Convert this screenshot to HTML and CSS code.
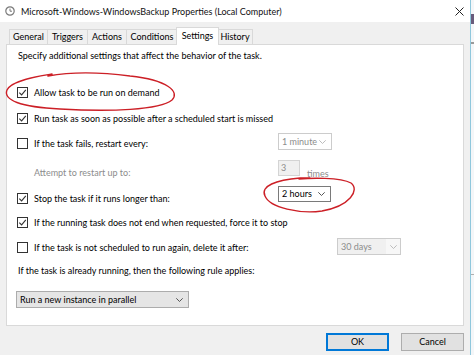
FILE: index.html
```html
<!DOCTYPE html>
<html>
<head>
<meta charset="utf-8">
<link rel="stylesheet" href="styles.css">
</head>
<body>
<div class="screen">
  <div class="dialog">
    <div class="titlebar">
      <svg class="appicon" width="10" height="10" viewBox="0 0 10 10"><circle cx="5" cy="5" r="4.2" fill="#fff" stroke="#7a7a7a" stroke-width="1.2"/><path d="M5 2.6V5.2H7" fill="none" stroke="#7a7a7a" stroke-width="1"/></svg>
      <span class="title">Microsoft-Windows-WindowsBackup Properties (Local Computer)</span>
      <svg class="close" width="9" height="9" viewBox="0 0 9 9"><path d="M0.5 0.5L8.5 8.5M8.5 0.5L0.5 8.5" stroke="#222" stroke-width="1"/></svg>
    </div>
    <div class="body">
      <div class="tabs">
        <div class="tab t-general">General</div>
        <div class="tab t-triggers">Triggers</div>
        <div class="tab t-actions">Actions</div>
        <div class="tab t-conditions">Conditions</div>
        <div class="tab selected t-settings">Settings</div>
        <div class="tab t-history">History</div>
      </div>
      <div class="panel">
        <div class="desc">Specify additional settings that affect the behavior of the task.</div>

        <div class="row r1">
          <span class="check on"><svg width="9" height="9" viewBox="0 0 9 9"><path d="M1.3 4.6L3.6 6.9L7.8 1.8" fill="none" stroke="#333" stroke-width="1.1"/></svg></span>
          <span class="label">Allow task to be run on demand</span>
        </div>
        <div class="row r2">
          <span class="check on"><svg width="9" height="9" viewBox="0 0 9 9"><path d="M1.3 4.6L3.6 6.9L7.8 1.8" fill="none" stroke="#333" stroke-width="1.1"/></svg></span>
          <span class="label">Run task as soon as possible after a scheduled start is missed</span>
        </div>
        <div class="row r3">
          <span class="check"></span>
          <span class="label w-ctl">If the task fails, restart every:</span>
          <span class="select disabled s-minute">1 minute<svg class="chev" width="7" height="4" viewBox="0 0 7 4"><path d="M0.3 0.3L3.5 3.5L6.7 0.3" fill="none" stroke="#b5b5b5" stroke-width="0.9"/></svg></span>
        </div>
        <div class="row r4">
          <span class="label indent gray w-ind">Attempt to restart up to:</span>
          <span class="input disabled">3</span>
          <span class="label gray times">times</span>
        </div>
        <div class="row r5">
          <span class="check on"><svg width="9" height="9" viewBox="0 0 9 9"><path d="M1.3 4.6L3.6 6.9L7.8 1.8" fill="none" stroke="#333" stroke-width="1.1"/></svg></span>
          <span class="label w-ctl">Stop the task if it runs longer than:</span>
          <span class="select s-hours">2 hours<svg class="chev" width="7" height="4" viewBox="0 0 7 4"><path d="M0.3 0.3L3.5 3.5L6.7 0.3" fill="none" stroke="#444" stroke-width="0.9"/></svg></span>
        </div>
        <div class="row r6">
          <span class="check on"><svg width="9" height="9" viewBox="0 0 9 9"><path d="M1.3 4.6L3.6 6.9L7.8 1.8" fill="none" stroke="#333" stroke-width="1.1"/></svg></span>
          <span class="label">If the running task does not end when requested, force it to stop</span>
        </div>
        <div class="row r7">
          <span class="check"></span>
          <span class="label w-days">If the task is not scheduled to run again, delete it after:</span>
          <span class="select disabled s-days">30 days<span class="dd-btn"><svg class="chev" width="7" height="4" viewBox="0 0 7 4"><path d="M0.3 0.3L3.5 3.5L6.7 0.3" fill="none" stroke="#b5b5b5" stroke-width="0.9"/></svg></span></span>
        </div>
        <div class="rule">If the task is already running, then the following rule applies:</div>
        <div class="select s-rule">Run a new instance in parallel<svg class="chev" width="7" height="4" viewBox="0 0 7 4"><path d="M0.3 0.3L3.5 3.5L6.7 0.3" fill="none" stroke="#444" stroke-width="0.9"/></svg></div>
      </div>
      <div class="buttons">
        <div class="btn default">OK</div>
        <div class="btn">Cancel</div>
      </div>
    </div>
  </div>
  <div class="behind">
    <div class="b1"></div>
    <div class="b2"></div>
    <div class="b3"></div>
  </div>
  <svg class="marks" width="474" height="355" viewBox="0 0 474 355">
    <path d="M52 74 C40 76 12 80 7 90 C3 100 20 107 60 109 C110 112 160 110 172 100 C180 92 168 80 130 76 C100 72 70 72 48 76" fill="none" stroke="#cc1f26" stroke-width="1.4" stroke-linecap="round"/>
    <path d="M299 179 C310 178 340 177 351 183 C360 190 350 206 322 211 C300 214 270 208 265 196 C260 186 276 180 300 178 C304 178 307 178 310 178" fill="none" stroke="#cc1f26" stroke-width="1.4" stroke-linecap="round"/>
  </svg>
</div>
</body>
</html>
```

FILE: styles.css
```css
* { box-sizing: border-box; }
html, body { margin: 0; padding: 0; }
body {
  width: 474px;
  height: 355px;
  overflow: hidden;
  background: #ffffff;
  font-family: "Lato", "Liberation Sans", sans-serif;
  font-size: 9px;
  color: #000;
}
.screen {
  position: relative;
  display: flex;
  width: 474px;
  height: 355px;
}
.dialog {
  width: 471px;
  height: 355px;
  background: #f0f0f0;
  border-right: 1px solid #8fc7dc;
  display: flex;
  flex-direction: column;
}
.titlebar {
  height: 22px;
  background: #ffffff;
  display: flex;
  align-items: center;
  padding-left: 5px;
}
.appicon { flex: none; }
.title {
  margin-left: 6px;
  font-size: 9px;
  color: #111;
}
.close { margin-left: auto; margin-right: 6px; }
.body {
  padding-left: 6px;
  display: flex;
  flex-direction: column;
}
.tabs {
  display: flex;
  margin-top: 7px;
  padding-left: 3px;
  height: 15px;
  align-items: flex-end;
}
.tab {
  height: 15px;
  border: 1px solid #d9d9d9;
  border-bottom: none;
  border-right: none;
  background: #f0f0f0;
  line-height: 14px;
  text-align: center;
  color: #000;
  position: relative;
  z-index: 1;
  white-space: nowrap;
}
.t-general { width: 38px; }
.t-triggers { width: 40px; }
.t-actions { width: 39px; }
.t-conditions { width: 51px; }
.t-history { width: 36px; border-right: 1px solid #d9d9d9; }
.tab.selected {
  width: 43px;
  height: 18px;
  margin-bottom: -1px;
  margin-left: -1px;
  margin-right: -2px;
  background: #ffffff;
  border-right: 1px solid #d9d9d9;
  z-index: 2;
  line-height: 15px;
}
.panel {
  width: 458px;
  height: 282px;
  background: #ffffff;
  border: 1px solid #d9d9d9;
  padding: 3px 0 0 10px;
  display: flex;
  flex-direction: column;
}
.desc {
  height: 16px;
  line-height: 16px;
  padding-left: 1px;
}
.row {
  display: flex;
  align-items: flex-start;
  height: 20px;
}
.r1 { margin-top: 19px; }
.r2 { margin-top: 6px; }
.r3 { margin-top: 5px; }
.r4 { margin-top: 9px; }
.r5 { margin-top: 6px; }
.r6 { margin-top: 4px; }
.r7 { margin-top: 5px; }
.check {
  flex: none;
  width: 11px;
  height: 11px;
  margin-top: 4px;
  border: 1px solid #333;
  background: #fff;
  display: flex;
  align-items: center;
  justify-content: center;
}
.label {
  line-height: 20px;
  margin-left: 6px;
  white-space: nowrap;
}
.gray { color: #8c8c8c; }
.indent { margin-left: 17px; }
.w-ctl { width: 244px; }
.w-ind { width: 244px; }
.w-days { width: 303px; }
.times { margin-left: 7px; line-height: 22px; }
.select {
  display: flex;
  align-items: center;
  height: 16px;
  border: 1px solid #7a7a7a;
  background: #fff;
  padding-left: 3px;
  line-height: 14px;
  white-space: nowrap;
}
.select .chev { margin-left: auto; margin-right: 5px; flex: none; }
.select.disabled { border-color: #cccccc; color: #8c8c8c; }
.s-minute { width: 54px; height: 17px; margin-top: -1px; }
.s-hours { width: 53px; margin-top: -3px; }
.s-days { width: 64px; height: 17px; background: #f0f0f0; border-color: #e3e3e3; padding-right: 0; }
.dd-btn {
  margin-left: auto;
  width: 14px;
  height: 15px;
  background: #f7f7f7;
  display: flex;
  align-items: center;
  justify-content: center;
}
.dd-btn .chev { margin: 0; }
.input {
  width: 22px;
  height: 16px;
  margin-top: -3px;
  border: 1px solid #d4d4d4;
  background: #f0f0f0;
  color: #8c8c8c;
  padding-left: 2px;
  line-height: 14px;
}
.rule {
  margin-top: 3px;
  height: 20px;
  line-height: 20px;
  padding-left: 1px;
}
.s-rule {
  margin-top: 10px;
  width: 173px;
  height: 17px;
  background: #e5e5e5;
  border-color: #acacac;
  margin-left: -1px;
}
.buttons {
  display: flex;
  justify-content: flex-end;
  gap: 12px;
  width: 458px;
  margin-top: 7px;
}
.btn {
  width: 63px;
  height: 18px;
  border: 1px solid #adadad;
  background: #e1e1e1;
  text-align: center;
  line-height: 16px;
}
.btn.default { border: 1px solid #0078d7; box-shadow: inset 0 0 0 1px #0078d7; }
.behind {
  width: 3px;
  height: 355px;
  background: #f4f6f8;
  display: flex;
  flex-direction: column;
}
.b1 { height: 10px; margin-top: 14px; background: #6a5b7b; }
.b2 { height: 2px; margin-top: 18px; background: #9a9a9a; }
.b3 { height: 1px; margin-top: 230px; background: #b0b0b0; }
.marks {
  position: absolute;
  left: 0;
  top: 0;
  pointer-events: none;
}
```
